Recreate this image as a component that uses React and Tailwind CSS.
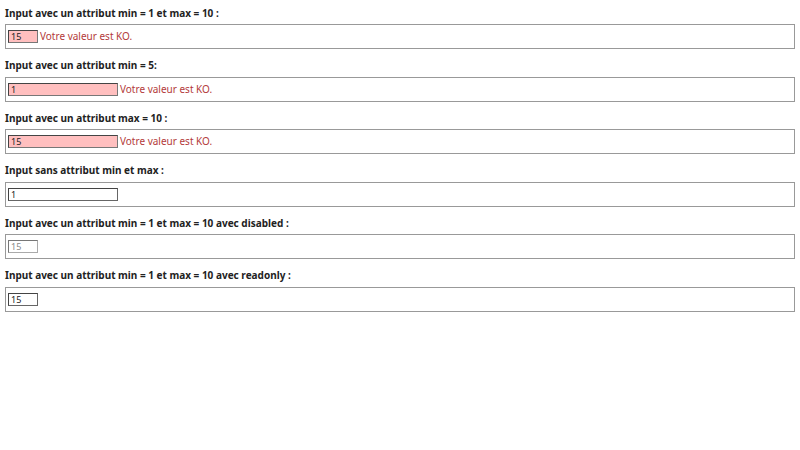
import React from "react";

const sections = [
  { label: "Input avec un attribut min = 1 et max = 10 :", value: "15", wide: false, ko: true },
  { label: "Input avec un attribut min = 5:", value: "1", wide: true, ko: true },
  { label: "Input avec un attribut max = 10 :", value: "15", wide: true, ko: true },
  { label: "Input sans attribut min et max :", value: "1", wide: true, ko: false },
  { label: "Input avec un attribut min = 1 et max = 10 avec disabled :", value: "15", wide: false, ko: false, disabled: true },
  { label: "Input avec un attribut min = 1 et max = 10 avec readonly :", value: "15", wide: false, ko: false },
];

export default function App() {
  return (
    <div className="w-[800px] h-[450px] bg-white pt-[2px] px-[5px]" style={{ fontFamily: '"Noto Sans", "DejaVu Sans", sans-serif' }}>
      {sections.map((s, i) => (
        <div key={i} className="mb-[5.6px]">
          <div className="h-[22px] flex items-center text-[10px] font-bold text-[#222]">{s.label}</div>
          <div className="h-[25px] border border-[#999] flex items-center px-[2px]">
            <div
              className={
                "h-[13px] flex items-center px-[2px] text-[9px] leading-none border-t border-l border-r border-b " +
                (s.wide ? "w-[110px] " : "w-[30px] ") +
                (s.ko
                  ? "bg-[#ffbfbf] border-t-[#444] border-l-[#444] border-r-[#777] border-b-[#777] text-[#222]"
                  : s.disabled
                  ? "bg-white border-t-[#777] border-l-[#777] border-r-[#aaa] border-b-[#aaa] text-[#888]"
                  : "bg-white border-t-[#444] border-l-[#444] border-r-[#666] border-b-[#666] text-[#222]")
              }
            >
              {s.value}
            </div>
            {s.ko && <span className="ml-[2px] text-[10px] text-[#b33a3a]">Votre valeur est KO.</span>}
          </div>
        </div>
      ))}
    </div>
  );
}
